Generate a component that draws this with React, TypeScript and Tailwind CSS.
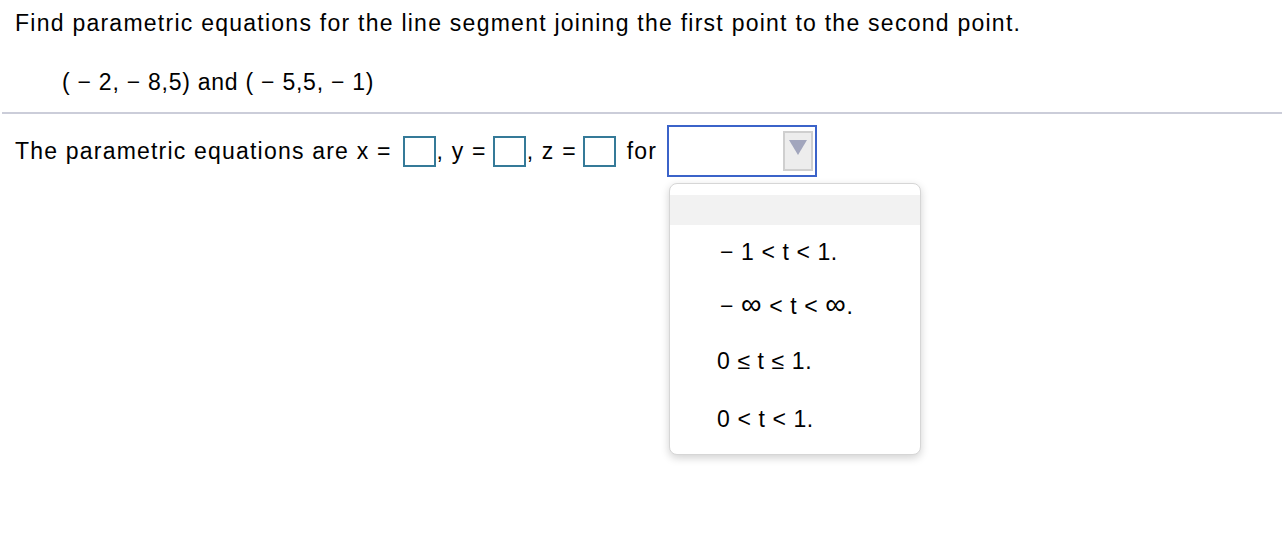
import React from "react";

const Box = () => (
  <span className="inline-block w-[33px] h-[31px] border-2 border-[#357a98] bg-white align-middle" />
);

const Inf = () => <span className="text-[29px] leading-none">∞</span>;

export default function App() {
  return (
    <div
      className="w-[1282px] h-[554px] bg-white text-black relative overflow-hidden"
      style={{ fontFamily: '"Liberation Sans", Arial, sans-serif' }}
    >
      <div className="pl-[15px] pt-[9px] text-[23px] leading-[28px] tracking-[1.25px]">
        Find parametric equations for the line segment joining the first point to the second point.
      </div>
      <div className="pl-[62px] pt-[31px] text-[23px] leading-[28px] tracking-[0.75px]">
        ( − 2, − 8,5) and ( − 5,5, − 1)
      </div>
      <div className="ml-[2px] mt-[16px] h-[2px] bg-[#cbcdd9]" />
      <div className="pl-[15px] pt-[11px] flex items-center text-[23px] leading-[28px] tracking-[1.2px] h-[52px] box-content">
        <span>The parametric equations are x =</span>
        <span className="ml-[11px]"><Box /></span>
        <span className="ml-[1px]">, y =</span>
        <span className="ml-[6px]"><Box /></span>
        <span className="ml-[1px]">, z =</span>
        <span className="ml-[6px]"><Box /></span>
        <span className="ml-[11px]">for</span>
        <div className="ml-[10px] w-[150px] h-[52px] border-2 border-[#3b63c9] flex items-center justify-end pr-[2px]">
          <div className="w-[30px] h-[40px] border-2 border-[#cfcfcf] bg-[#ededed] flex items-start justify-center pt-[6px]">
            <svg width="20" height="17" viewBox="0 0 20 17">
              <polygon points="1,1 19,1 10,16" fill="#a2a6bd" />
            </svg>
          </div>
        </div>
      </div>
      <div className="absolute left-[669px] top-[183px] w-[252px] h-[272px] bg-white border border-[#d6d6d6] rounded-[8px] shadow-[0_3px_8px_rgba(0,0,0,0.18)] overflow-hidden">
        <div className="mt-[11px] h-[30px] bg-[#f2f2f2]" />
        <div className="text-[23px] leading-[28px] tracking-[0.6px]">
          <div className="pl-[50px] h-[54px] flex items-center">− 1 &lt; t &lt; 1.</div>
          <div className="pl-[50px] h-[52px] flex items-center">
            <span>− <Inf /> &lt; t &lt; <Inf />.</span>
          </div>
          <div className="pl-[47px] h-[60px] flex items-center">0 ≤ t ≤ 1.</div>
          <div className="pl-[47px] h-[56px] flex items-center">0 &lt; t &lt; 1.</div>
        </div>
      </div>
    </div>
  );
}
